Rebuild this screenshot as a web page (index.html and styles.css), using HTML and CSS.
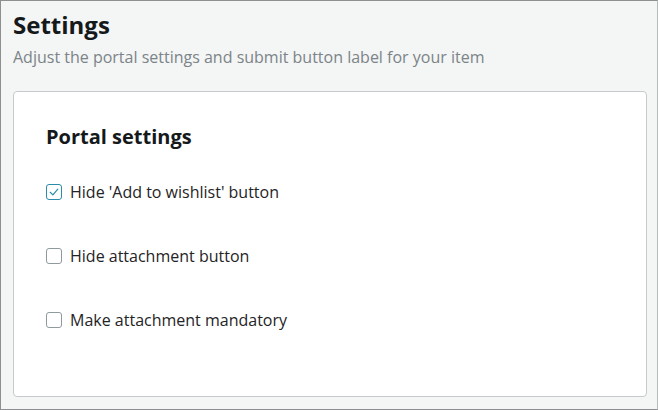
FILE: index.html
```html
<!DOCTYPE html>
<html>
<head>
<meta charset="utf-8">
<link rel="stylesheet" href="styles.css">
</head>
<body>
<div class="frame">
  <h1 class="title">Settings</h1>
  <p class="subtitle">Adjust the portal settings and submit button label for your item</p>
  <div class="card">
    <h2 class="card-title">Portal settings</h2>
    <ul class="options">
      <li class="option">
        <span class="box checked">
          <svg viewBox="0 0 16 16" width="16" height="16"><path d="M4.2 8.3 L6.9 10.9 L11.8 5.2" fill="none" stroke="#2a8ca8" stroke-width="1.2" stroke-linecap="round" stroke-linejoin="round"/></svg>
        </span>
        <span class="label">Hide 'Add to wishlist' button</span>
      </li>
      <li class="option">
        <span class="box"></span>
        <span class="label">Hide attachment button</span>
      </li>
      <li class="option">
        <span class="box"></span>
        <span class="label">Make attachment mandatory</span>
      </li>
    </ul>
  </div>
</div>
</body>
</html>
```
FILE: styles.css
```css
html, body {
  margin: 0;
  padding: 0;
}
body {
  font-family: "Open Sans", "Noto Sans", sans-serif;
  background: #f4f5f5;
  color: #1a1c1d;
}
.frame {
  box-sizing: border-box;
  width: 658px;
  height: 410px;
  border: 1px solid #8d8f90;
  border-right-color: #b9bcbd;
  padding: 0 10px 0 12px;
  background: #f4f5f5;
}
.title {
  margin: 7px 0 0 0;
  font-size: 24px;
  line-height: 33px;
  font-weight: 700;
  color: #15191b;
}
.subtitle {
  margin: 5px 0 0 0;
  font-size: 16px;
  line-height: 22px;
  color: #7b8488;
}
.card {
  margin-top: 23px;
  box-sizing: border-box;
  height: 306px;
  background: #ffffff;
  border: 1px solid #c6cacc;
  border-radius: 4px;
  padding: 31px 32px 0 32px;
}
.card-title {
  margin: 0;
  font-size: 20px;
  line-height: 28px;
  font-weight: 700;
  color: #15191b;
}
.options {
  list-style: none;
  margin: 30px 0 0 0;
  padding: 0;
  display: flex;
  flex-direction: column;
  gap: 42px;
}
.option {
  display: flex;
  align-items: center;
  gap: 8px;
  height: 22px;
}
.box {
  box-sizing: border-box;
  width: 16px;
  height: 16px;
  border: 1px solid #8f9a9e;
  border-radius: 3px;
  background: #fff;
  display: flex;
  align-items: center;
  justify-content: center;
  flex-shrink: 0;
}
.box.checked {
  border-color: #2a8ca8;
}
.box svg {
  display: block;
  margin: -1px;
}
.label {
  font-size: 16px;
  line-height: 22px;
  color: #1f2426;
}
```
